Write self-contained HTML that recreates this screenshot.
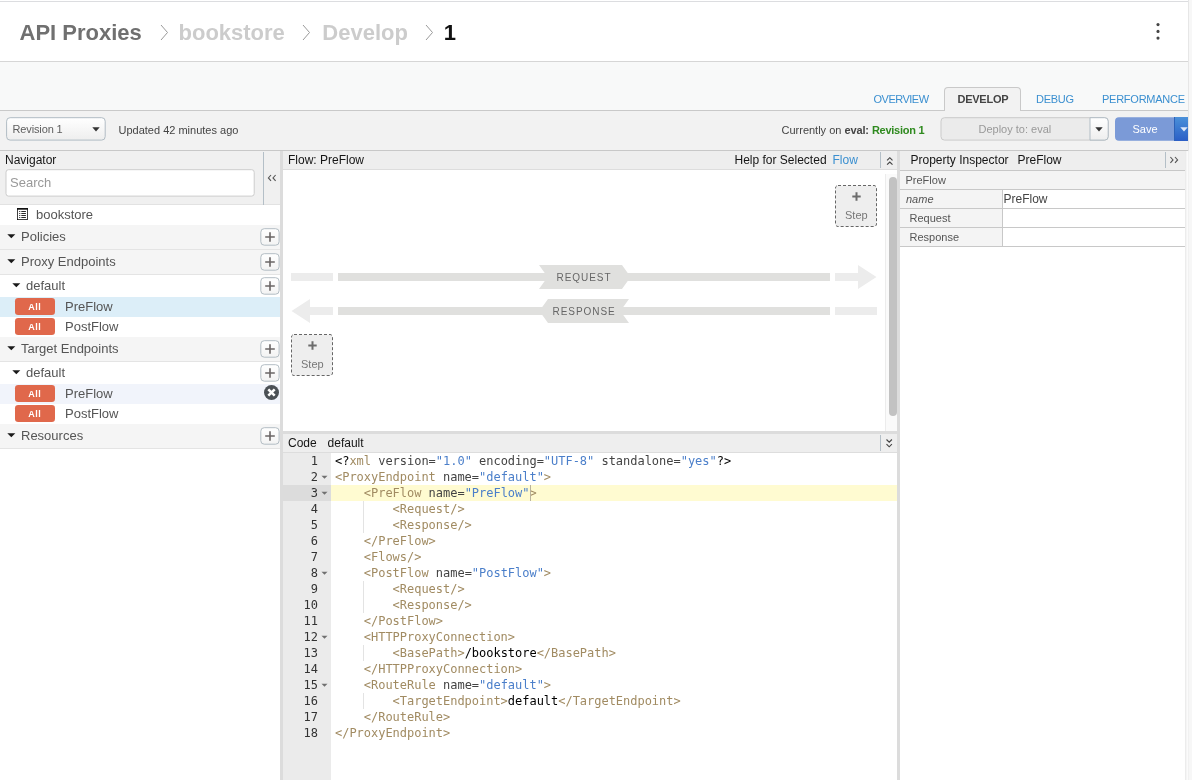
<!DOCTYPE html>
<html lang="en"><head><meta charset="utf-8"><title>API Proxies - bookstore - Develop</title>
<style>
html,body{margin:0;padding:0}
body{width:1192px;height:780px;overflow:hidden;background:#fff;position:relative;font-family:"Liberation Sans", sans-serif}
#app{position:absolute;left:0;top:0;width:1192px;height:780px;will-change:transform}
.a{position:absolute;display:block}
.t{position:absolute;white-space:pre;display:block}
.ln{font-family:"DejaVu Sans Mono", "Liberation Mono", monospace;font-size:12px;line-height:16px;text-align:right;color:#333}
.cl{font-family:"DejaVu Sans Mono", "Liberation Mono", monospace;font-size:12px;line-height:16px;white-space:pre;color:#000;letter-spacing:-0.024px}
.g{color:#a18b62} .n{color:#444} .s{color:#4b7fca} .x{color:#000}
</style></head>
<body>
<div id="app">
<div class="a " style="left:0px;top:1px;width:1188px;height:1px;background:#dcdde0"></div>
<span class="t" style="left:19.5px;top:21.78px;font-size:22px;line-height:22px;color:#707070;font-weight:bold;">API Proxies</span>
<span class="t" style="left:178.5px;top:21.78px;font-size:22px;line-height:22px;color:#ccc;font-weight:bold;">bookstore</span>
<span class="t" style="left:322.3px;top:21.78px;font-size:22px;line-height:22px;color:#ccc;font-weight:bold;">Develop</span>
<span class="t" style="left:443.8px;top:21.78px;font-size:22px;line-height:22px;color:#111;font-weight:bold;">1</span>
<svg class="a" style="left:159.5px;top:24px" width="9" height="17" viewBox="0 0 9 17"><polyline points="1,1 7.5,8.5 1,16" fill="none" stroke="#999" stroke-width="1"/></svg>
<svg class="a" style="left:302px;top:24px" width="9" height="17" viewBox="0 0 9 17"><polyline points="1,1 7.5,8.5 1,16" fill="none" stroke="#999" stroke-width="1"/></svg>
<svg class="a" style="left:425px;top:24px" width="9" height="17" viewBox="0 0 9 17"><polyline points="1,1 7.5,8.5 1,16" fill="none" stroke="#999" stroke-width="1"/></svg>
<svg class="a" style="left:1150px;top:20px" width="16" height="24" viewBox="1150 20 16 24"><circle cx="1158" cy="24.6" r="1.55" fill="#444"/><circle cx="1158" cy="31.4" r="1.55" fill="#444"/><circle cx="1158" cy="38.1" r="1.55" fill="#444"/></svg>
<div class="a " style="left:0px;top:61px;width:1188px;height:1px;background:#d6d6d6"></div>
<div class="a " style="left:0px;top:62px;width:1188px;height:48px;background:#f8f9f9"></div>
<div class="a " style="left:0px;top:110px;width:1188px;height:1px;background:#c9c9c9"></div>
<span class="t" style="left:873.5px;top:93.69px;font-size:11px;line-height:11px;color:#3a8fd0;font-weight:normal;letter-spacing:-0.5px;">OVERVIEW</span>
<div class="a " style="left:944px;top:87px;width:77px;height:24px;background:#f2f2f2;border:1px solid #c9c9c9;border-bottom:none;border-radius:4px 4px 0 0;box-sizing:border-box"></div>
<span class="t" style="left:957.5px;top:93.69px;font-size:11px;line-height:11px;color:#444;font-weight:bold;letter-spacing:-0.25px;">DEVELOP</span>
<span class="t" style="left:1036px;top:93.69px;font-size:11px;line-height:11px;color:#3a8fd0;font-weight:normal;letter-spacing:-0.25px;">DEBUG</span>
<span class="t" style="left:1102px;top:93.69px;font-size:11px;line-height:11px;color:#3a8fd0;font-weight:normal;letter-spacing:-0.25px;">PERFORMANCE</span>
<div class="a " style="left:0px;top:111px;width:1188px;height:39px;background:#f2f2f2"></div>
<div class="a " style="left:0px;top:150px;width:1188px;height:1px;background:#c8c8c8"></div>
<svg class="a" style="left:5px;top:116px" width="102" height="26"><defs><linearGradient id="g1" x1="0" y1="0" x2="0" y2="1"><stop offset="0" stop-color="#ffffff"/><stop offset="1" stop-color="#eeeeee"/></linearGradient></defs><rect x="1.60" y="1.70" width="98.60" height="22.40" rx="3.5" fill="url(#g1)" stroke="#b1bcc4" stroke-width="1"/></svg>
<span class="t" style="left:12.5px;top:123.89px;font-size:11px;line-height:11px;color:#5e5e5e;font-weight:normal;letter-spacing:-0.13px;">Revision 1</span>
<svg class="a" style="left:92px;top:127px" width="8" height="5" viewBox="0 0 8 5"><polygon points="0.3,0.3 7.7,0.3 4,4.6" fill="#333"/></svg>
<span class="t" style="left:118.5px;top:125.49px;font-size:11px;line-height:11px;color:#444;font-weight:normal;">Updated 42 minutes ago</span>
<span class="t" style="left:781.5px;top:125.49px;font-size:11px;line-height:11px;color:#444;font-weight:normal;">Currently on <b style="letter-spacing:-0.15px">eval:</b> <b style="color:#2f8a1f;letter-spacing:-0.25px">Revision 1</b></span>
<svg class="a" style="left:939px;top:116px" width="171" height="26"><rect x="2.00" y="1.70" width="167.20" height="22.40" rx="3.5" fill="#ebebeb" stroke="#cbcbcb" stroke-width="1"/></svg>
<svg class="a" style="left:1088px;top:116px" width="22" height="26"><defs><linearGradient id="g2" x1="0" y1="0" x2="0" y2="1"><stop offset="0" stop-color="#ffffff"/><stop offset="1" stop-color="#eeeeee"/></linearGradient></defs><path d="M2.00 1.70H16.70A3.5 3.5 0 0 1 20.20 5.20V20.60A3.5 3.5 0 0 1 16.70 24.10H2.00V1.70Z" fill="url(#g2)" stroke="#b1bcc4" stroke-width="1"/></svg>
<span class="t" style="left:978.5px;top:123.89px;font-size:11px;line-height:11px;color:#999;font-weight:normal;">Deploy to: eval</span>
<svg class="a" style="left:1095px;top:127px" width="8" height="5" viewBox="0 0 8 5"><polygon points="0.3,0.3 7.7,0.3 4,4.6" fill="#333"/></svg>
<svg class="a" style="left:1114px;top:116px" width="62" height="26"><path d="M5.00 1.30H60.50V24.70H5.00A4 4 0 0 1 1.00 20.70V5.30A4 4 0 0 1 5.00 1.30Z" fill="#7b9ad7"/></svg>
<div class="a " style="left:1174px;top:117px;width:14px;height:24px;background:linear-gradient(#f2f2f2 0,#f2f2f2 1.2%,#4a90d9 1.3%,#2c5fc6 98.6%,#f2f2f2 98.7%);border-left:1px solid #2d62b8;box-sizing:border-box"></div>
<span class="t" style="left:1132.5px;top:123.89px;font-size:11px;line-height:11px;color:#fff;font-weight:normal;">Save</span>
<svg class="a" style="left:1180px;top:127px" width="8" height="5" viewBox="0 0 8 5"><polygon points="0.3,0.3 7.7,0.3 4,4.6" fill="#dfe9fa"/></svg>
<div class="a " style="left:0px;top:151px;width:280px;height:629px;background:#fff"></div>
<div class="a " style="left:0px;top:151px;width:280px;height:53px;background:#f0f0f0"></div>
<div class="a " style="left:0px;top:204px;width:280px;height:1px;background:#e2e2e2"></div>
<span class="t" style="left:5px;top:153.84px;font-size:12px;line-height:12px;color:#151515;font-weight:normal;">Navigator</span>
<svg class="a" style="left:4px;top:168px" width="252" height="30"><rect x="2.00" y="1.70" width="248.20" height="26.40" rx="2.5" fill="#fff" stroke="#cdcdcd" stroke-width="1"/></svg>
<span class="t" style="left:10px;top:175.50px;font-size:13px;line-height:13px;color:#999;font-weight:normal;">Search</span>
<div class="a " style="left:263px;top:152px;width:1px;height:53px;background:#b4bfc7"></div>
<svg class="a" style="left:267px;top:174px" width="10" height="8" viewBox="0 0 10 8"><polyline points="4,1 1.4,3.9 4,6.8" fill="none" stroke="#555" stroke-width="1.12"/><polyline points="8.6,1 6,3.9 8.6,6.8" fill="none" stroke="#555" stroke-width="1.12"/></svg>
<svg class="a" style="left:17px;top:208px" width="11" height="12" viewBox="0 0 11 12"><rect x="0.4" y="0.4" width="10.2" height="11.2" fill="#fff" stroke="#111" stroke-width="0.8"/><rect x="0" y="0" width="11" height="1.7" fill="#111"/><path d="M2.2 3.5h1.1M2.2 5.5h1.1M2.2 7.5h1.1M2.2 9.5h1.1M4.3 3.5h4.6M4.3 5.5h4.6M4.3 7.5h4.6M4.3 9.5h4.6" stroke="#111" stroke-width="0.9"/></svg>
<span class="t" style="left:36px;top:208.20px;font-size:13px;line-height:13px;color:#555;font-weight:normal;">bookstore</span>
<div class="a " style="left:0px;top:225px;width:280px;height:24px;background:#f5f5f5"></div>
<div class="a " style="left:0px;top:249px;width:280px;height:1px;background:#e4e4e4"></div>
<svg class="a" style="left:7px;top:233.7px" width="9" height="5" viewBox="0 0 9 5"><polygon points="0.3,0.3 8.3,0.3 4.3,4.2" fill="#1a1a1a"/></svg>
<span class="t" style="left:21px;top:229.60px;font-size:13px;line-height:13px;color:#555;font-weight:normal;">Policies</span>
<svg class="a" style="left:259px;top:227px" width="22" height="20"><defs><linearGradient id="g3" x1="0" y1="0" x2="0" y2="1"><stop offset="0" stop-color="#ffffff"/><stop offset="1" stop-color="#f3f3f3"/></linearGradient></defs><rect x="1.80" y="1.70" width="18.30" height="16.50" rx="3.5" fill="url(#g3)" stroke="#b3bdc4" stroke-width="1"/></svg>
<svg class="a" style="left:265px;top:231.95px" width="10" height="10" viewBox="0 0 10 10"><path d="M5 0.2V9.8M0.2 5H9.8" stroke="#6a6565" stroke-width="1.6" fill="none"/></svg>
<div class="a " style="left:0px;top:250px;width:280px;height:24px;background:#f5f5f5"></div>
<div class="a " style="left:0px;top:274px;width:280px;height:1px;background:#e4e4e4"></div>
<svg class="a" style="left:7px;top:258.7px" width="9" height="5" viewBox="0 0 9 5"><polygon points="0.3,0.3 8.3,0.3 4.3,4.2" fill="#1a1a1a"/></svg>
<span class="t" style="left:21px;top:254.60px;font-size:13px;line-height:13px;color:#555;font-weight:normal;">Proxy Endpoints</span>
<svg class="a" style="left:259px;top:252px" width="22" height="20"><defs><linearGradient id="g4" x1="0" y1="0" x2="0" y2="1"><stop offset="0" stop-color="#ffffff"/><stop offset="1" stop-color="#f3f3f3"/></linearGradient></defs><rect x="1.80" y="1.70" width="18.30" height="16.50" rx="3.5" fill="url(#g4)" stroke="#b3bdc4" stroke-width="1"/></svg>
<svg class="a" style="left:265px;top:256.95px" width="10" height="10" viewBox="0 0 10 10"><path d="M5 0.2V9.8M0.2 5H9.8" stroke="#6a6565" stroke-width="1.6" fill="none"/></svg>
<svg class="a" style="left:12px;top:283px" width="9" height="5" viewBox="0 0 9 5"><polygon points="0.3,0.3 8.3,0.3 4.3,4.2" fill="#1a1a1a"/></svg>
<span class="t" style="left:26px;top:279.00px;font-size:13px;line-height:13px;color:#555;font-weight:normal;">default</span>
<svg class="a" style="left:259px;top:276px" width="22" height="20"><defs><linearGradient id="g5" x1="0" y1="0" x2="0" y2="1"><stop offset="0" stop-color="#ffffff"/><stop offset="1" stop-color="#f3f3f3"/></linearGradient></defs><rect x="1.80" y="1.70" width="18.30" height="16.50" rx="3.5" fill="url(#g5)" stroke="#b3bdc4" stroke-width="1"/></svg>
<svg class="a" style="left:265px;top:280.95px" width="10" height="10" viewBox="0 0 10 10"><path d="M5 0.2V9.8M0.2 5H9.8" stroke="#6a6565" stroke-width="1.6" fill="none"/></svg>
<div class="a " style="left:0px;top:297px;width:280px;height:20px;background:#dceef8"></div>
<svg class="a" style="left:14px;top:297px" width="42" height="19"><rect x="1.00" y="1.10" width="40.00" height="16.90" rx="3.2" fill="#e0684b"/></svg>
<span class="t" style="left:28.3px;top:303.08px;font-size:9px;line-height:9px;color:#fff;font-weight:bold;letter-spacing:0.45px;">All</span>
<span class="t" style="left:65px;top:300.30px;font-size:13px;line-height:13px;color:#555;font-weight:normal;">PreFlow</span>
<svg class="a" style="left:14px;top:317px" width="42" height="19"><rect x="1.00" y="1.10" width="40.00" height="16.90" rx="3.2" fill="#e0684b"/></svg>
<span class="t" style="left:28.3px;top:323.08px;font-size:9px;line-height:9px;color:#fff;font-weight:bold;letter-spacing:0.45px;">All</span>
<span class="t" style="left:65px;top:320.30px;font-size:13px;line-height:13px;color:#555;font-weight:normal;">PostFlow</span>
<div class="a " style="left:0px;top:337px;width:280px;height:24px;background:#f5f5f5"></div>
<div class="a " style="left:0px;top:361px;width:280px;height:1px;background:#e4e4e4"></div>
<svg class="a" style="left:7px;top:345.7px" width="9" height="5" viewBox="0 0 9 5"><polygon points="0.3,0.3 8.3,0.3 4.3,4.2" fill="#1a1a1a"/></svg>
<span class="t" style="left:21px;top:341.60px;font-size:13px;line-height:13px;color:#555;font-weight:normal;">Target Endpoints</span>
<svg class="a" style="left:259px;top:339px" width="22" height="20"><defs><linearGradient id="g6" x1="0" y1="0" x2="0" y2="1"><stop offset="0" stop-color="#ffffff"/><stop offset="1" stop-color="#f3f3f3"/></linearGradient></defs><rect x="1.80" y="1.70" width="18.30" height="16.50" rx="3.5" fill="url(#g6)" stroke="#b3bdc4" stroke-width="1"/></svg>
<svg class="a" style="left:265px;top:343.95px" width="10" height="10" viewBox="0 0 10 10"><path d="M5 0.2V9.8M0.2 5H9.8" stroke="#6a6565" stroke-width="1.6" fill="none"/></svg>
<svg class="a" style="left:12px;top:370px" width="9" height="5" viewBox="0 0 9 5"><polygon points="0.3,0.3 8.3,0.3 4.3,4.2" fill="#1a1a1a"/></svg>
<span class="t" style="left:26px;top:366.00px;font-size:13px;line-height:13px;color:#555;font-weight:normal;">default</span>
<svg class="a" style="left:259px;top:363px" width="22" height="20"><defs><linearGradient id="g7" x1="0" y1="0" x2="0" y2="1"><stop offset="0" stop-color="#ffffff"/><stop offset="1" stop-color="#f3f3f3"/></linearGradient></defs><rect x="1.80" y="1.70" width="18.30" height="16.50" rx="3.5" fill="url(#g7)" stroke="#b3bdc4" stroke-width="1"/></svg>
<svg class="a" style="left:265px;top:367.95px" width="10" height="10" viewBox="0 0 10 10"><path d="M5 0.2V9.8M0.2 5H9.8" stroke="#6a6565" stroke-width="1.6" fill="none"/></svg>
<div class="a " style="left:0px;top:384px;width:280px;height:20px;background:#f1f4fb"></div>
<svg class="a" style="left:14px;top:384px" width="42" height="19"><rect x="1.00" y="1.10" width="40.00" height="16.90" rx="3.2" fill="#e0684b"/></svg>
<span class="t" style="left:28.3px;top:390.08px;font-size:9px;line-height:9px;color:#fff;font-weight:bold;letter-spacing:0.45px;">All</span>
<span class="t" style="left:65px;top:387.30px;font-size:13px;line-height:13px;color:#555;font-weight:normal;">PreFlow</span>
<svg class="a" style="left:263px;top:384px" width="17" height="17" viewBox="263 384 17 17"><circle cx="271.5" cy="392.5" r="7.5" fill="#4b5156"/><path d="M268.3 389.3L274.7 395.7M274.7 389.3L268.3 395.7" stroke="#fff" stroke-width="2.5"/></svg>
<svg class="a" style="left:14px;top:404px" width="42" height="19"><rect x="1.00" y="1.10" width="40.00" height="16.90" rx="3.2" fill="#e0684b"/></svg>
<span class="t" style="left:28.3px;top:410.08px;font-size:9px;line-height:9px;color:#fff;font-weight:bold;letter-spacing:0.45px;">All</span>
<span class="t" style="left:65px;top:407.30px;font-size:13px;line-height:13px;color:#555;font-weight:normal;">PostFlow</span>
<div class="a " style="left:0px;top:424px;width:280px;height:24px;background:#f5f5f5"></div>
<div class="a " style="left:0px;top:448px;width:280px;height:1px;background:#e4e4e4"></div>
<svg class="a" style="left:7px;top:432.7px" width="9" height="5" viewBox="0 0 9 5"><polygon points="0.3,0.3 8.3,0.3 4.3,4.2" fill="#1a1a1a"/></svg>
<span class="t" style="left:21px;top:428.60px;font-size:13px;line-height:13px;color:#555;font-weight:normal;">Resources</span>
<svg class="a" style="left:259px;top:426px" width="22" height="20"><defs><linearGradient id="g8" x1="0" y1="0" x2="0" y2="1"><stop offset="0" stop-color="#ffffff"/><stop offset="1" stop-color="#f3f3f3"/></linearGradient></defs><rect x="1.80" y="1.70" width="18.30" height="16.50" rx="3.5" fill="url(#g8)" stroke="#b3bdc4" stroke-width="1"/></svg>
<svg class="a" style="left:265px;top:430.95px" width="10" height="10" viewBox="0 0 10 10"><path d="M5 0.2V9.8M0.2 5H9.8" stroke="#6a6565" stroke-width="1.6" fill="none"/></svg>
<div class="a " style="left:280px;top:151px;width:3px;height:629px;background:#dcdcdc"></div>
<div class="a " style="left:897px;top:151px;width:3px;height:629px;background:#dcdcdc"></div>
<div class="a " style="left:283px;top:431px;width:614px;height:3px;background:#dcdcdc"></div>
<div class="a " style="left:283px;top:151px;width:614px;height:18px;background:#eee"></div>
<div class="a " style="left:283px;top:169px;width:614px;height:1px;background:#ddd"></div>
<span class="t" style="left:288px;top:153.84px;font-size:12px;line-height:12px;color:#151515;font-weight:normal;">Flow: PreFlow</span>
<span class="t" style="left:734.5px;top:153.84px;font-size:12px;line-height:12px;color:#151515;font-weight:normal;">Help for Selected</span>
<span class="t" style="left:832.5px;top:153.84px;font-size:12px;line-height:12px;color:#3a8fd0;font-weight:normal;">Flow</span>
<div class="a " style="left:880px;top:152px;width:1px;height:16px;background:#b4bfc7"></div>
<svg class="a" style="left:884px;top:154px" width="12" height="14" viewBox="884 154 12 14"><polyline points="887.1,160.4 889.8,157.7 892.5,160.4" fill="none" stroke="#444" stroke-width="1.15"/><polyline points="887.1,164.7 889.8,162 892.5,164.7" fill="none" stroke="#444" stroke-width="1.15"/></svg>
<div class="a " style="left:885px;top:174px;width:1px;height:257px;background:#ececec"></div>
<div class="a " style="left:886px;top:174px;width:11px;height:257px;background:#fafafa"></div>
<div class="a " style="left:889px;top:177px;width:7.6px;height:239px;background:#c2c2c2;border-radius:4px"></div>
<svg class="a" style="left:834px;top:184px" width="44" height="44"><rect x="1.50" y="1.50" width="41.00" height="41.00" rx="2.5" fill="#eee" stroke="#666" stroke-width="1" stroke-dasharray="3 2"/></svg>
<svg class="a" style="left:851.7px;top:192.3px" width="9" height="9" viewBox="0 0 9 9"><path d="M4.5 0.3V8.7M0.3 4.5H8.7" stroke="#6c6c6c" stroke-width="2" fill="none"/></svg>
<span class="t" style="left:845px;top:209.69px;font-size:11px;line-height:11px;color:#777;font-weight:normal;">Step</span>
<svg class="a" style="left:290px;top:333px" width="44" height="44"><rect x="1.50" y="1.50" width="41.00" height="41.00" rx="2.5" fill="#eee" stroke="#666" stroke-width="1" stroke-dasharray="3 2"/></svg>
<svg class="a" style="left:307.7px;top:341.3px" width="9" height="9" viewBox="0 0 9 9"><path d="M4.5 0.3V8.7M0.3 4.5H8.7" stroke="#6c6c6c" stroke-width="2" fill="none"/></svg>
<span class="t" style="left:301px;top:358.69px;font-size:11px;line-height:11px;color:#777;font-weight:normal;">Step</span>
<svg class="a" style="left:283px;top:255px" width="602" height="80" viewBox="283 255 602 80">
<rect x="291" y="273" width="42" height="8" fill="#ececec"/>
<rect x="338" y="273" width="492" height="8" fill="#e0e0de"/>
<polygon points="835,273 858,273 858,265 876.5,277 858,289 858,281 835,281" fill="#ececec"/>
<polygon points="539,265 622,265 630.6,277 622,289 539,289 547.6,277" fill="#e0e0de"/>
<polygon points="291.5,311 310,299 310,307 333,307 333,315 310,315 310,323" fill="#ececec"/>
<rect x="338" y="307" width="492" height="8" fill="#e0e0de"/>
<rect x="835" y="307" width="42" height="8" fill="#ececec"/>
<polygon points="548,299 629,299 620.4,311 629,323 548,323 539.4,311" fill="#e0e0de"/>
<text x="556.5" y="280.8" font-family='"Liberation Sans", sans-serif' font-size="10" letter-spacing="0.95" fill="#666">REQUEST</text>
<text x="552.5" y="314.6" font-family='"Liberation Sans", sans-serif' font-size="10" letter-spacing="0.95" fill="#666">RESPONSE</text>
</svg>
<div class="a " style="left:283px;top:434px;width:614px;height:18px;background:#eee"></div>
<div class="a " style="left:283px;top:452px;width:614px;height:1px;background:#ddd"></div>
<span class="t" style="left:288px;top:436.84px;font-size:12px;line-height:12px;color:#151515;font-weight:normal;">Code</span>
<span class="t" style="left:327.6px;top:436.84px;font-size:12px;line-height:12px;color:#151515;font-weight:normal;">default</span>
<div class="a " style="left:880px;top:435px;width:1px;height:16px;background:#b4bfc7"></div>
<svg class="a" style="left:884px;top:436px" width="12" height="14" viewBox="884 436 12 14"><polyline points="886.5,439.5 889.2,442.1 891.9,439.5" fill="none" stroke="#444" stroke-width="1.15"/><polyline points="886.5,444.2 889.2,446.8 891.9,444.2" fill="none" stroke="#444" stroke-width="1.15"/></svg>
<div class="a " style="left:283px;top:453px;width:614px;height:327px;background:#fff"></div>
<div class="a " style="left:283px;top:453px;width:48px;height:327px;background:#ebebeb"></div>
<div class="a " style="left:283px;top:485px;width:48px;height:16px;background:#dcdcdc"></div>
<div class="a " style="left:331px;top:485px;width:566px;height:16px;background:#fffbd1"></div>
<div class="a ln" style="left:283px;top:453px;width:35px;height:16px">1</div>
<div class="a cl" style="left:335px;top:453px;height:16px"><span class="x">&lt;?</span><span class="g">xml</span><span class="n"> version=</span><span class="s">&quot;1.0&quot;</span><span class="n"> encoding=</span><span class="s">&quot;UTF-8&quot;</span><span class="n"> standalone=</span><span class="s">&quot;yes&quot;</span><span class="x">?&gt;</span></div>
<div class="a ln" style="left:283px;top:469px;width:35px;height:16px">2</div>
<svg class="a" style="left:321px;top:475px" width="7" height="5" viewBox="0 0 7 5"><polygon points="0.5,0.7 6.5,0.7 3.5,3.7" fill="#707070"/></svg>
<div class="a cl" style="left:335px;top:469px;height:16px"><span class="g">&lt;ProxyEndpoint</span><span class="n"> name=</span><span class="s">&quot;default&quot;</span><span class="g">&gt;</span></div>
<div class="a ln" style="left:283px;top:485px;width:35px;height:16px">3</div>
<svg class="a" style="left:321px;top:491px" width="7" height="5" viewBox="0 0 7 5"><polygon points="0.5,0.7 6.5,0.7 3.5,3.7" fill="#707070"/></svg>
<div class="a cl" style="left:335px;top:485px;height:16px">    <span class="g">&lt;PreFlow</span><span class="n"> name=</span><span class="s">&quot;PreFlow&quot;</span><span class="g">&gt;</span></div>
<div class="a ln" style="left:283px;top:501px;width:35px;height:16px">4</div>
<div class="a " style="left:363px;top:501px;width:1px;height:16px;background:#e3e3e3"></div>
<div class="a cl" style="left:335px;top:501px;height:16px">        <span class="g">&lt;Request/&gt;</span></div>
<div class="a ln" style="left:283px;top:517px;width:35px;height:16px">5</div>
<div class="a " style="left:363px;top:517px;width:1px;height:16px;background:#e3e3e3"></div>
<div class="a cl" style="left:335px;top:517px;height:16px">        <span class="g">&lt;Response/&gt;</span></div>
<div class="a ln" style="left:283px;top:533px;width:35px;height:16px">6</div>
<div class="a cl" style="left:335px;top:533px;height:16px">    <span class="g">&lt;/PreFlow&gt;</span></div>
<div class="a ln" style="left:283px;top:549px;width:35px;height:16px">7</div>
<div class="a cl" style="left:335px;top:549px;height:16px">    <span class="g">&lt;Flows/&gt;</span></div>
<div class="a ln" style="left:283px;top:565px;width:35px;height:16px">8</div>
<svg class="a" style="left:321px;top:571px" width="7" height="5" viewBox="0 0 7 5"><polygon points="0.5,0.7 6.5,0.7 3.5,3.7" fill="#707070"/></svg>
<div class="a cl" style="left:335px;top:565px;height:16px">    <span class="g">&lt;PostFlow</span><span class="n"> name=</span><span class="s">&quot;PostFlow&quot;</span><span class="g">&gt;</span></div>
<div class="a ln" style="left:283px;top:581px;width:35px;height:16px">9</div>
<div class="a " style="left:363px;top:581px;width:1px;height:16px;background:#e3e3e3"></div>
<div class="a cl" style="left:335px;top:581px;height:16px">        <span class="g">&lt;Request/&gt;</span></div>
<div class="a ln" style="left:283px;top:597px;width:35px;height:16px">10</div>
<div class="a " style="left:363px;top:597px;width:1px;height:16px;background:#e3e3e3"></div>
<div class="a cl" style="left:335px;top:597px;height:16px">        <span class="g">&lt;Response/&gt;</span></div>
<div class="a ln" style="left:283px;top:613px;width:35px;height:16px">11</div>
<div class="a cl" style="left:335px;top:613px;height:16px">    <span class="g">&lt;/PostFlow&gt;</span></div>
<div class="a ln" style="left:283px;top:629px;width:35px;height:16px">12</div>
<svg class="a" style="left:321px;top:635px" width="7" height="5" viewBox="0 0 7 5"><polygon points="0.5,0.7 6.5,0.7 3.5,3.7" fill="#707070"/></svg>
<div class="a cl" style="left:335px;top:629px;height:16px">    <span class="g">&lt;HTTPProxyConnection&gt;</span></div>
<div class="a ln" style="left:283px;top:645px;width:35px;height:16px">13</div>
<div class="a " style="left:363px;top:645px;width:1px;height:16px;background:#e3e3e3"></div>
<div class="a cl" style="left:335px;top:645px;height:16px">        <span class="g">&lt;BasePath&gt;</span><span class="x">/bookstore</span><span class="g">&lt;/BasePath&gt;</span></div>
<div class="a ln" style="left:283px;top:661px;width:35px;height:16px">14</div>
<div class="a cl" style="left:335px;top:661px;height:16px">    <span class="g">&lt;/HTTPProxyConnection&gt;</span></div>
<div class="a ln" style="left:283px;top:677px;width:35px;height:16px">15</div>
<svg class="a" style="left:321px;top:683px" width="7" height="5" viewBox="0 0 7 5"><polygon points="0.5,0.7 6.5,0.7 3.5,3.7" fill="#707070"/></svg>
<div class="a cl" style="left:335px;top:677px;height:16px">    <span class="g">&lt;RouteRule</span><span class="n"> name=</span><span class="s">&quot;default&quot;</span><span class="g">&gt;</span></div>
<div class="a ln" style="left:283px;top:693px;width:35px;height:16px">16</div>
<div class="a " style="left:363px;top:693px;width:1px;height:16px;background:#e3e3e3"></div>
<div class="a cl" style="left:335px;top:693px;height:16px">        <span class="g">&lt;TargetEndpoint&gt;</span><span class="x">default</span><span class="g">&lt;/TargetEndpoint&gt;</span></div>
<div class="a ln" style="left:283px;top:709px;width:35px;height:16px">17</div>
<div class="a cl" style="left:335px;top:709px;height:16px">    <span class="g">&lt;/RouteRule&gt;</span></div>
<div class="a ln" style="left:283px;top:725px;width:35px;height:16px">18</div>
<div class="a cl" style="left:335px;top:725px;height:16px"><span class="g">&lt;/ProxyEndpoint&gt;</span></div>
<div class="a " style="left:530px;top:485px;width:1px;height:16px;background:#b9b29c"></div>
<div class="a " style="left:900px;top:151px;width:288px;height:629px;background:#fff"></div>
<div class="a " style="left:900px;top:151px;width:285px;height:19px;background:#eee"></div>
<div class="a " style="left:900px;top:170px;width:285px;height:1px;background:#c8c8c8"></div>
<span class="t" style="left:910.5px;top:153.84px;font-size:12px;line-height:12px;color:#151515;font-weight:normal;">Property Inspector</span>
<span class="t" style="left:1017.5px;top:153.84px;font-size:12px;line-height:12px;color:#151515;font-weight:normal;">PreFlow</span>
<div class="a " style="left:1165px;top:152px;width:1px;height:16px;background:#b4bfc7"></div>
<svg class="a" style="left:1169px;top:156px" width="10" height="8" viewBox="0 0 10 8"><polyline points="1.4,1 4,3.9 1.4,6.8" fill="none" stroke="#555" stroke-width="1.12"/><polyline points="6,1 8.6,3.9 6,6.8" fill="none" stroke="#555" stroke-width="1.12"/></svg>
<div class="a " style="left:900px;top:171px;width:285px;height:18px;background:#f4f4f4"></div>
<div class="a " style="left:900px;top:189px;width:285px;height:1px;background:#c8c8c8"></div>
<span class="t" style="left:905.5px;top:175.09px;font-size:11px;line-height:11px;color:#555;font-weight:normal;">PreFlow</span>
<div class="a " style="left:900px;top:190px;width:102px;height:18px;background:#f4f4f4"></div>
<div class="a " style="left:1002px;top:190px;width:1px;height:18px;background:#c8c8c8"></div>
<div class="a " style="left:900px;top:208px;width:285px;height:1px;background:#c8c8c8"></div>
<span class="t" style="left:906px;top:194.19px;font-size:11px;line-height:11px;color:#555;font-weight:normal;font-style:italic;">name</span>
<span class="t" style="left:1003.5px;top:193.34px;font-size:12px;line-height:12px;color:#444;font-weight:normal;">PreFlow</span>
<div class="a " style="left:900px;top:209px;width:102px;height:18px;background:#f4f4f4"></div>
<div class="a " style="left:1002px;top:209px;width:1px;height:18px;background:#c8c8c8"></div>
<div class="a " style="left:900px;top:227px;width:285px;height:1px;background:#c8c8c8"></div>
<span class="t" style="left:909.5px;top:213.19px;font-size:11px;line-height:11px;color:#555;font-weight:normal;">Request</span>
<div class="a " style="left:900px;top:228px;width:102px;height:18px;background:#f4f4f4"></div>
<div class="a " style="left:1002px;top:228px;width:1px;height:18px;background:#c8c8c8"></div>
<div class="a " style="left:900px;top:246px;width:285px;height:1px;background:#c8c8c8"></div>
<span class="t" style="left:909.5px;top:232.19px;font-size:11px;line-height:11px;color:#555;font-weight:normal;">Response</span>
<div class="a " style="left:1185px;top:151px;width:3px;height:629px;background:linear-gradient(90deg,#ececec 0,#ececec 33%,#f5f5f5 33.4%,#f5f5f5 66%,#fbfbfb 66.7%)"></div>
<div class="a " style="left:1188px;top:0px;width:1px;height:151px;background:#e6e6e6"></div>
<div class="a " style="left:1188px;top:151px;width:1px;height:629px;background:#f1f1f1"></div>
<div class="a " style="left:1189px;top:0px;width:3px;height:780px;background:#f7f7f7"></div>
</div>
</body></html>
